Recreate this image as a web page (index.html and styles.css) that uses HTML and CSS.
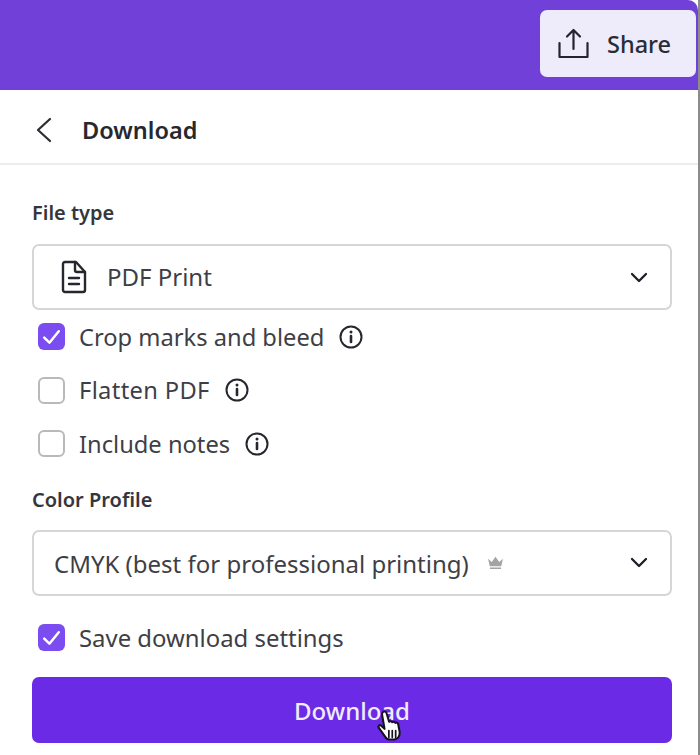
FILE: index.html
```html
<!DOCTYPE html>
<html lang="en">
<head>
  <meta charset="UTF-8" />
  <meta name="viewport" content="width=device-width, initial-scale=1.0" />
  <title>Download</title>
  <link rel="stylesheet" href="styles.css">
</head>
<body>
  <div class="app">
    <header class="topbar">
      <button class="share">
        <svg class="share-icon" viewBox="0 0 32 32" fill="none" stroke="#23242e" stroke-width="2.2" stroke-linecap="round" stroke-linejoin="round">
          <path d="M1.5 15v14h28V15"/>
          <path d="M15.500 21V2M9 8.500L15.500 2 22 8.500"/>
        </svg>
        <span>Share</span>
      </button>
    </header>

    <main class="panel">
      <div class="panel-head">
        <svg class="back" viewBox="0 0 16 26" fill="none" stroke="#2b2c33" stroke-width="2.2" stroke-linecap="round" stroke-linejoin="round">
          <path d="M14 2L2 13l12 11"/>
        </svg>
        <h1>Download</h1>
      </div>

      <div class="panel-body">
        <h2 class="label">File type</h2>
        <div class="select select-file">
          <svg class="doc" viewBox="0 0 26 34" fill="none" stroke="#26272e" stroke-width="2.4" stroke-linejoin="round" stroke-linecap="round">
            <path d="M2 4a2 2 0 0 1 2-2h11l9 10v18a2 2 0 0 1-2 2H4a2 2 0 0 1-2-2z"/>
            <path d="M14 2v8a2 2 0 0 0 2 2h8"/>
            <path d="M8 18h10M8 24h10"/>
          </svg>
          <span class="select-text">PDF Print</span>
          <svg class="chev" viewBox="0 0 18 11" fill="none" stroke="#1d1e26" stroke-width="2.3" stroke-linecap="round" stroke-linejoin="round"><path d="M2 2l7 7 7-7"/></svg>
        </div>

        <ul class="options">
          <li>
            <span class="check on"><svg viewBox="0 0 26 26" fill="none" stroke="#fff" stroke-width="2.4" stroke-linecap="round" stroke-linejoin="round"><path d="M6 14l5 5 9-11"/></svg></span>
            Crop marks and bleed
            <svg class="info" viewBox="0 0 24 24" fill="none" stroke="#26272e" stroke-width="2"><circle cx="12" cy="12" r="10.5"/><path d="M12 11v6" stroke-width="2.6" stroke-linecap="round"/><circle cx="12" cy="7" r="1.5" fill="#26272e" stroke="none"/></svg>
          </li>
          <li class="wide">
            <span class="check"></span>
            Flatten PDF
            <svg class="info" viewBox="0 0 24 24" fill="none" stroke="#26272e" stroke-width="2"><circle cx="12" cy="12" r="10.5"/><path d="M12 11v6" stroke-width="2.6" stroke-linecap="round"/><circle cx="12" cy="7" r="1.5" fill="#26272e" stroke="none"/></svg>
          </li>
          <li>
            <span class="check"></span>
            Include notes
            <svg class="info" viewBox="0 0 24 24" fill="none" stroke="#26272e" stroke-width="2"><circle cx="12" cy="12" r="10.5"/><path d="M12 11v6" stroke-width="2.6" stroke-linecap="round"/><circle cx="12" cy="7" r="1.5" fill="#26272e" stroke="none"/></svg>
          </li>
        </ul>

        <h2 class="label label-color">Color Profile</h2>
        <div class="select select-color">
          <span class="select-text">CMYK (best for professional printing)</span>
          <svg class="crown" viewBox="0 0 16 14" fill="#a3a3a8"><path d="M1 3.500l3.500 3L8 1.500l3.500 5 3.500-3-1.600 7H2.600zM2.800 11.600h10.400V13H2.800z"/></svg>
          <svg class="chev" viewBox="0 0 18 11" fill="none" stroke="#1d1e26" stroke-width="2.3" stroke-linecap="round" stroke-linejoin="round"><path d="M2 2l7 7 7-7"/></svg>
        </div>

        <div class="save-row">
          <span class="check on"><svg viewBox="0 0 26 26" fill="none" stroke="#fff" stroke-width="2.4" stroke-linecap="round" stroke-linejoin="round"><path d="M6 14l5 5 9-11"/></svg></span>
          Save download settings
        </div>

        <button class="download">
          Download
          <svg class="cursor" viewBox="0 0 24 30">
            <path d="M6 2.500c1.300-.8 2.700 0 3 1.300l2.200 7.500c.8-.8 2.200-.8 2.800.3.800-.7 2.200-.5 2.700.6.900-.5 2.100-.1 2.500 1l1.300 7c.4 3-1.200 6-4.500 6.800h-4c-2.200 0-3.500-1-4.600-3L2 16.500c-.8-1.200.6-2.800 2-2l3.200 3L5 5c-.2-1 .2-2 1-2.500z" fill="#fff" stroke="#15121c" stroke-width="1.800" stroke-linejoin="round"/>
            <path d="M11 19v6M14 19v6M17 19v6" stroke="#15121c" stroke-width="1.500" stroke-linecap="round"/>
          </svg>
        </button>
      </div>
    </main>
  </div>
</body>
</html>
```
FILE: styles.css
```css
* { box-sizing: border-box; margin: 0; padding: 0; }

body {
  font-family: "Noto Sans", sans-serif;
  width: 700px;
  height: 755px;
  overflow: hidden;
  background: #fff;
  color: #3a3b42;
}

/* thin grey window edge down the right side */
.app {
  width: 700px;
  height: 755px;
  border-right: 2px solid #8c8c8c;
}

.topbar {
  height: 90px;
  padding: 10px 2px 0 0;
  display: flex;
  justify-content: flex-end;
  align-items: flex-start;
  background: #7040d9;
  border-top-right-radius: 10px;
}

.share {
  width: 156px;
  height: 67px;
  display: flex;
  align-items: center;
  padding-left: 18px;
  gap: 17px;
  border: none;
  border-radius: 7px;
  background: #eeebfa;
  color: #2a2b35;
  font: 500 23.500px "Noto Sans", sans-serif;
}

.share-icon { width: 32px; height: 32px; }

.panel {
  height: 665px;
  background: #fff;
}

.panel-head {
  height: 75px;
  display: flex;
  align-items: center;
  padding: 6px 0 0 36px;
  gap: 30px;
  border-bottom: 2px solid #ececec;
}

.back { width: 16px; height: 26px; }

.panel-head h1 {
  font-size: 23.500px;
  font-weight: 600;
  color: #27282f;
}

.panel-body { padding: 35px 0 0 32px; }

.label {
  font-size: 20px;
  line-height: 26px;
  font-weight: 600;
  color: #35363d;
}

.select {
  width: 640px;
  height: 66px;
  margin-top: 18px;
  display: flex;
  align-items: center;
  border: 2px solid #d6d6d8;
  border-radius: 7px;
  font-size: 24px;
  color: #3e3f46;
}

.select-file { padding: 0 22px 0 27px; gap: 20px; }
.select-file .select-text { flex: 1; margin-top: -2px; }
.select-color { padding: 0 22px 0 20px; margin-top: 17px; }
.select-color .select-text { margin: 2px 18px 0 0; }

.doc { width: 26px; height: 34px; }
.chev { width: 18px; height: 11px; }
.select-color .chev { margin-left: auto; }
.crown { width: 17px; height: 15px; }

.options { list-style: none; }

.options li, .save-row {
  height: 53.500px;
  display: flex;
  align-items: center;
  padding-left: 6px;
  font-size: 23.700px;
  color: #3e3f46;
}

.options .wide { letter-spacing: .35px; }

.check {
  width: 27px;
  height: 27px;
  margin-right: 14px;
  border: 2px solid #b9b9bc;
  border-radius: 6px;
  background: #fff;
}

.check svg { display: block; width: 100%; height: 100%; }

.check.on {
  border: none;
  background: #7b4df0;
}

.info { width: 24px; height: 24px; margin-left: 15px; }

.label-color { margin-top: 16px; }

.save-row { margin-top: 15px; font-size: 23.900px; }

.download {
  position: relative;
  width: 640px;
  height: 66px;
  margin-top: 13px;
  border: none;
  border-radius: 7px;
  background: #6a2ae6;
  color: #f1ecfd;
  font: 500 24px "Noto Sans", sans-serif;
}

.cursor {
  position: absolute;
  left: 343px;
  top: 32px;
  width: 30px;
  height: 34px;
}
```
